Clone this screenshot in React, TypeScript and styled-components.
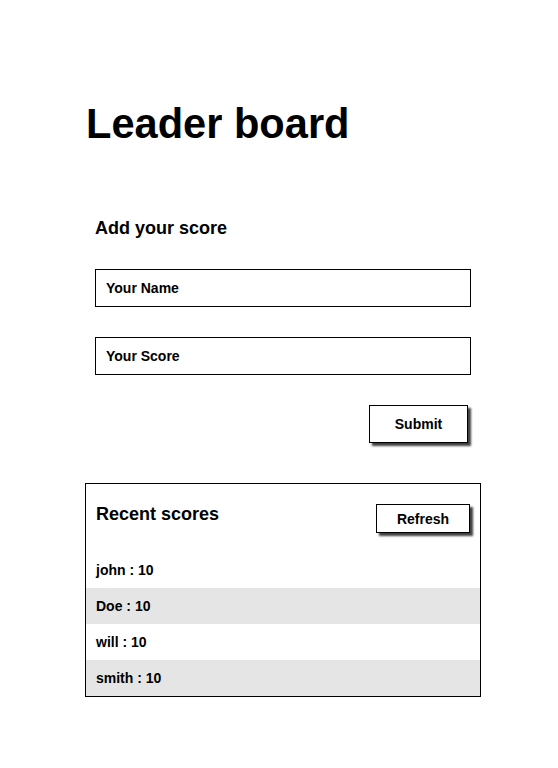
import styled, { createGlobalStyle } from "styled-components";

const GlobalStyle = createGlobalStyle`
    body {
        margin: 0;
        background: #ffffff;
        font-family: "Liberation Sans", Arial, sans-serif;
        color: #000000;
    }
`;

const Page = styled.div`
    width: 396px;
    margin-left: 85px;
    padding-top: 100px;
    padding-bottom: 40px;
`;

const Title = styled.h1`
    margin: 0 0 0 1px;
    font-size: 41.6px;
    font-weight: 700;
    line-height: 48px;
`;

const Form = styled.form`
    display: flex;
    flex-direction: column;
    padding: 0 10px;
    margin-top: 69px;
`;

const SubTitle = styled.h2`
    margin: 0 0 30px;
    font-size: 18px;
    font-weight: 700;
    line-height: 22px;
`;

const Field = styled.input`
    box-sizing: border-box;
    height: 38px;
    width: 100%;
    margin-bottom: 30px;
    padding: 0 10px;
    border: 1px solid #000;
    font-family: inherit;
    font-size: 14px;
    font-weight: 700;
    color: #000;
    outline: none;
    &::placeholder {
        color: #000;
        opacity: 1;
    }
`;

const ShadowButton = styled.button<{ $w: number; $h: number }>`
    box-sizing: border-box;
    width: ${(p) => p.$w}px;
    height: ${(p) => p.$h}px;
    border: 1px solid #000;
    background: #fff;
    box-shadow: 3px 3px 2px rgba(0, 0, 0, 0.75);
    font-family: inherit;
    font-size: 14px;
    font-weight: 700;
    color: #000;
    cursor: pointer;
    padding: 0;
`;

const Actions = styled.div`
    display: flex;
    justify-content: flex-end;
    padding-right: 3px;
`;

const Card = styled.section`
    margin-top: 40px;
    border: 1px solid #000;
`;

const CardHead = styled.div`
    display: flex;
    justify-content: space-between;
    align-items: flex-start;
    padding: 19px 10px 0 10px;
    height: 68px;
    box-sizing: border-box;
    button {
        margin-top: 1px;
    }
`;

const CardTitle = styled.h3`
    margin: 0;
    font-size: 18px;
    font-weight: 700;
    line-height: 22px;
`;

const Row = styled.div<{ $shade: boolean }>`
    height: 36px;
    display: flex;
    align-items: center;
    padding-left: 10px;
    font-size: 14px;
    font-weight: 700;
    background: ${(p) => (p.$shade ? "#e5e5e5" : "#fff")};
`;

const scores = [
    { name: "john", score: 10 },
    { name: "Doe", score: 10 },
    { name: "will", score: 10 },
    { name: "smith", score: 10 },
];

export default function App() {
    return (
        <>
            <GlobalStyle />
            <Page>
                <Title>Leader board</Title>
                <Form onSubmit={(e) => e.preventDefault()}>
                    <SubTitle>Add your score</SubTitle>
                    <Field placeholder="Your Name" />
                    <Field placeholder="Your Score" />
                    <Actions>
                        <ShadowButton type="submit" $w={99} $h={38}>
                            Submit
                        </ShadowButton>
                    </Actions>
                </Form>
                <Card>
                    <CardHead>
                        <CardTitle>Recent scores</CardTitle>
                        <ShadowButton type="button" $w={94} $h={29}>
                            Refresh
                        </ShadowButton>
                    </CardHead>
                    {scores.map((s, i) => (
                        <Row key={s.name} $shade={i % 2 === 1}>
                            {s.name} : {s.score}
                        </Row>
                    ))}
                </Card>
            </Page>
        </>
    );
}
